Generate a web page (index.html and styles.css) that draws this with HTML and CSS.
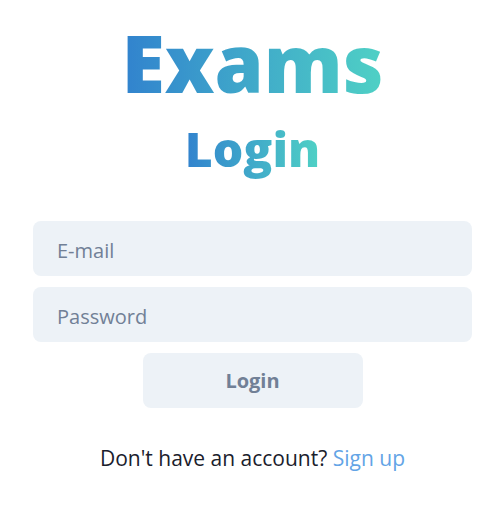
FILE: index.html
```html
<!DOCTYPE html>
<html>
<head>
<meta charset="utf-8">
<link rel="stylesheet" href="styles.css">
</head>
<body>
<main class="page">
  <h1 class="brand">Exams</h1>
  <h2 class="title">Login</h2>
  <form class="form">
    <input class="field" type="email" placeholder="E-mail">
    <input class="field" type="password" placeholder="Password">
    <button class="btn" type="button">Login</button>
  </form>
  <p class="signup">Don't have an account? <a class="link" href="#">Sign up</a></p>
</main>
</body>
</html>
```
FILE: styles.css
```css
* { box-sizing: border-box; }
html, body { margin: 0; padding: 0; background: #fff; }
body { font-family: "Open Sans", "Noto Sans", sans-serif; }
.page {
  display: flex;
  flex-direction: column;
  align-items: center;
  padding: 0 29px 0 33px;
}
.brand, .title {
  margin: 0;
  font-weight: 800;
  background: linear-gradient(90deg, #3182ce, #4fd1c5);
  -webkit-background-clip: text;
  background-clip: text;
  color: transparent;
}
.brand {
  font-size: 79px;
  line-height: 1;
  margin-top: 23px;
  padding-bottom: 7px;
}
.title {
  font-size: 48px;
  line-height: 1;
  margin-top: 16px;
  padding-bottom: 12px;
}
.form {
  width: 100%;
  display: flex;
  flex-direction: column;
  align-items: center;
  gap: 11px;
  margin-top: 36px;
}
.field {
  width: 100%;
  height: 55px;
  border: none;
  border-radius: 8px;
  background: #edf2f7;
  padding: 3px 24px 0;
  font-family: inherit;
  font-size: 20px;
  color: #2d3748;
  outline: none;
}
.field::placeholder { color: #718096; }
.btn {
  width: 220px;
  height: 55px;
  border: none;
  border-radius: 8px;
  background: #edf2f7;
  color: #718096;
  font-family: inherit;
  font-size: 20px;
  font-weight: 700;
}
.signup {
  margin: 36px 0 0;
  font-size: 21px;
  color: #1a202c;
}
.link { color: #63a4e6; text-decoration: none; }
```
